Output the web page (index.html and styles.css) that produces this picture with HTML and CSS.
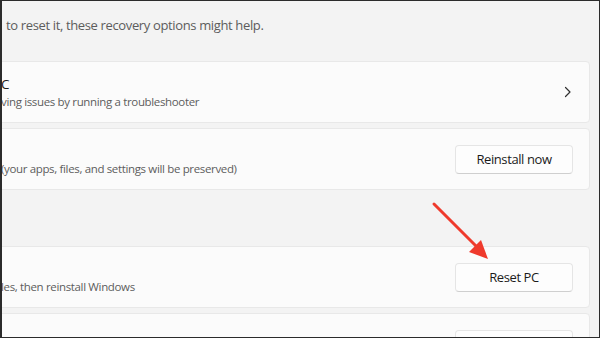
FILE: index.html
```html
<!DOCTYPE html>
<html lang="en">
<head>
<meta charset="utf-8">
<title>Recovery</title>
<link rel="stylesheet" href="styles.css">
</head>
<body>
<div class="frame">
  <p class="intro">to reset it, these recovery options might help.</p>
  <div class="group">
    <div class="card">
      <div class="text">
        <div class="title">C</div>
        <div class="sub">ving issues by running a troubleshooter</div>
      </div>
      <svg class="chevron" width="8" height="12" viewBox="0 0 8 12"><path d="M1.5 1.5 L6 6 L1.5 10.5" fill="none" stroke="#303030" stroke-width="1.2" stroke-linecap="round" stroke-linejoin="round"/></svg>
    </div>
    <div class="card">
      <div class="text">
        <div class="title"></div>
        <div class="sub">(your apps, files, and settings will be preserved)</div>
      </div>
      <button class="btn">Reinstall now</button>
    </div>
  </div>
  <div class="group group-reset">
    <div class="card">
      <div class="text">
        <div class="title"></div>
        <div class="sub">les, then reinstall Windows</div>
      </div>
      <button class="btn">Reset PC</button>
    </div>
    <div class="card">
      <div class="text">
        <div class="title"></div>
        <div class="sub"></div>
      </div>
      <button class="btn" aria-label="Restart now"></button>
    </div>
  </div>
  <svg class="arrow" width="600" height="338" viewBox="0 0 600 338">
    <line x1="434" y1="204" x2="478" y2="248" stroke="#ef3a2c" stroke-width="3" stroke-linecap="round"/>
    <polygon points="488,259 469,252 481,240" fill="#ef3a2c"/>
  </svg>
</div>
</body>
</html>
```
FILE: styles.css
```css
html, body {
  margin: 0;
  padding: 0;
}
body {
  font-family: "Open Sans", "Noto Sans", sans-serif;
  background: #f3f3f3;
}
.frame {
  position: relative;
  box-sizing: border-box;
  width: 600px;
  height: 338px;
  overflow: hidden;
  background: #f3f3f3;
  border: 1px solid #2b2b2b;
  border-left-width: 2px;
}
.intro {
  margin: 0;
  padding: 14px 0 0 4px;
  font-size: 13px;
  line-height: 20px;
  letter-spacing: -0.36px;
  color: #5c5c5c;
}
.group {
  display: flex;
  flex-direction: column;
  gap: 5px;
  margin: 26px 9px 0 -20px;
}
.group-reset {
  margin-top: 56px;
}
.card {
  box-sizing: border-box;
  height: 62px;
  display: flex;
  align-items: center;
  justify-content: space-between;
  padding: 0 16px 0 18px;
  background: #fbfbfb;
  border: 1px solid #e8e8e8;
  border-radius: 4px;
}
.text {
  display: flex;
  flex-direction: column;
}
.title {
  height: 20px;
  font-size: 13.5px;
  line-height: 20px;
  color: #1b1b1b;
}
.sub {
  height: 16px;
  font-size: 11.5px;
  line-height: 16px;
  letter-spacing: -0.35px;
  color: #5d5d5d;
}
.chevron {
  margin-right: 1px;
}
.btn {
  box-sizing: border-box;
  width: 118px;
  height: 29px;
  padding: 0;
  font-family: inherit;
  font-size: 13px;
  letter-spacing: -0.4px;
  color: #1b1b1b;
  background: #fdfdfd;
  border: 1px solid #e5e5e5;
  border-bottom-color: #cfcfcf;
  border-radius: 4px;
}
.arrow {
  position: absolute;
  left: -2px;
  top: -1px;
}
```
